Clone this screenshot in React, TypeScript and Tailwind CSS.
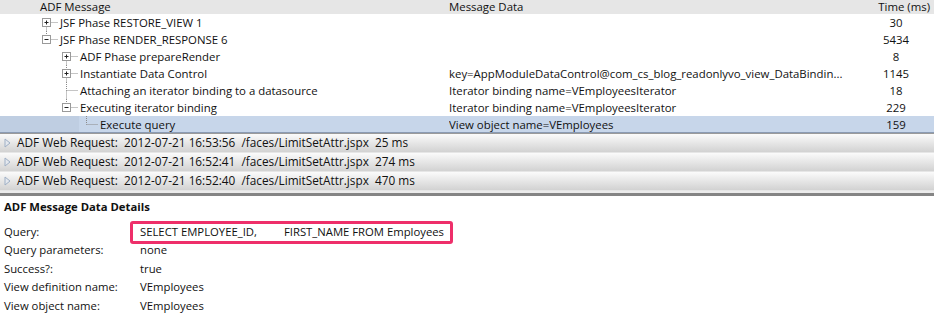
import React from "react";

type TreeRow = {
  level: number;
  label: string;
  data?: string;
  time: string;
  box?: "+" | "-";
  up: boolean;
  down: boolean;
  selected?: boolean;
};

const rows: TreeRow[] = [
  { level: 0, label: "JSF Phase RESTORE_VIEW 1", time: "30", box: "+", up: false, down: true },
  { level: 0, label: "JSF Phase RENDER_RESPONSE 6", time: "5434", box: "-", up: true, down: false },
  { level: 1, label: "ADF Phase prepareRender", time: "8", box: "+", up: false, down: true },
  {
    level: 1,
    label: "Instantiate Data Control",
    data: "key=AppModuleDataControl@com_cs_blog_readonlyvo_view_DataBindin...",
    time: "1145",
    box: "+",
    up: true,
    down: true,
  },
  {
    level: 1,
    label: "Attaching an iterator binding to a datasource",
    data: "Iterator binding name=VEmployeesIterator",
    time: "18",
    up: true,
    down: true,
  },
  {
    level: 1,
    label: "Executing iterator binding",
    data: "Iterator binding name=VEmployeesIterator",
    time: "229",
    box: "-",
    up: true,
    down: false,
  },
  {
    level: 2,
    label: "Execute query",
    data: "View object name=VEmployees",
    time: "159",
    up: true,
    down: false,
    selected: true,
  },
];

const requests = [
  "ADF Web Request:  2012-07-21 16:53:56  /faces/LimitSetAttr.jspx  25 ms",
  "ADF Web Request:  2012-07-21 16:52:41  /faces/LimitSetAttr.jspx  274 ms",
  "ADF Web Request:  2012-07-21 16:52:40  /faces/LimitSetAttr.jspx  470 ms",
];

const details = [
  ["Query parameters:", "none"],
  ["Success?:", "true"],
  ["View definition name:", "VEmployees"],
  ["View object name:", "VEmployees"],
];

// dotted connector + expander box for one row
const TreeGutter = ({ row }: { row: TreeRow }) => {
  const x = 46.5 + row.level * 20;
  const w = 60 + row.level * 20;
  return (
    <svg width={w} height={17} className="shrink-0">
      {row.up && <line x1={x} y1={0} x2={x} y2={8.5} stroke="#8a8a8a" strokeDasharray="1 1" />}
      {row.down && <line x1={x} y1={8.5} x2={x} y2={17} stroke="#8a8a8a" strokeDasharray="1 1" />}
      <line x1={x} y1={8.5} x2={x + 12} y2={8.5} stroke="#8a8a8a" strokeDasharray="1 1" />
      {row.box && (
        <g>
          <rect x={x - 4} y={4.5} width={8} height={8} fill="#fff" stroke="#9a9a9a" />
          <line x1={x - 2} y1={8.5} x2={x + 2} y2={8.5} stroke="#222" />
          {row.box === "+" && <line x1={x} y1={6.5} x2={x} y2={10.5} stroke="#222" />}
        </g>
      )}
    </svg>
  );
};

const App: React.FC = () => {
  return (
    <div
      className="w-[934px] h-[318px] bg-white text-[11.4px] text-[#111] overflow-hidden flex flex-col"
      style={{ fontFamily: '"Open Sans", "Noto Sans", sans-serif' }}
    >
      {/* Column header */}
      <div className="h-[14px] shrink-0 bg-[#e6e6e6] flex items-center leading-[14px]">
        <div className="w-[449px] pl-[40px]">ADF Message</div>
        <div className="flex-1">Message Data</div>
        <div className="pr-[4px]">Time (ms)</div>
      </div>

      {/* Tree rows */}
      {rows.map((row) => (
        <div
          key={row.label}
          className={`h-[17px] shrink-0 flex items-center leading-[17px] ${
            row.selected ? "bg-[#c7d6ea] border-b border-[#8b9bb3]" : ""
          }`}
        >
          <div className="w-[449px] h-full flex items-center relative">
            {row.selected && <div className="absolute left-0 top-0 bottom-0 w-[79px] bg-[#bfcee2]" />}
            <div className="relative flex items-center">
              <TreeGutter row={row} />
              <span className="whitespace-nowrap">{row.label}</span>
            </div>
          </div>
          <div className="w-[411px] whitespace-nowrap overflow-hidden">{row.data ?? ""}</div>
          <div className="w-[72px] text-center">{row.time}</div>
        </div>
      ))}

      <div className="h-px shrink-0 bg-[#9a9a9a]" />

      {/* Web requests */}
      {requests.map((r) => (
        <div
          key={r}
          className="h-[19px] shrink-0 flex items-center gap-[6px] pl-[4px] bg-gradient-to-b from-[#fbfbfb] to-[#d2d2d2] border-b border-[#e6e6e6] text-[11.8px]"
        >
          <svg width="7" height="10" viewBox="0 0 7 10">
            <polygon points="1,1 6,5 1,9" fill="#e4e8ee" stroke="#9fb0c6" />
          </svg>
          <span className="whitespace-pre leading-none">{r}</span>
        </div>
      ))}

      <div className="h-[2px] shrink-0 bg-[#ececec]" />
      <div className="h-[3px] shrink-0 bg-[#858585]" />

      {/* Details */}
      <div className="flex flex-col px-[4px] text-[11.3px]">
        <div className="h-[22px] flex items-center font-bold">ADF Message Data Details</div>
        <div className="h-[23px] flex items-start pt-[3px]">
          <div className="w-[126px] h-[23px] flex items-center">Query:</div>
          <div className="h-[23px] w-[323px] flex items-center border-[3px] border-[#ee2f6a] rounded-[3px] pl-[7px] whitespace-pre">
            <span>SELECT EMPLOYEE_ID,</span>
            <span className="ml-[27px]">FIRST_NAME FROM Employees</span>
          </div>
        </div>
        {details.map(([k, v]) => (
          <div key={k} className="h-[18.75px] flex items-center">
            <div className="w-[136px]">{k}</div>
            <div>{v}</div>
          </div>
        ))}
      </div>
    </div>
  );
};

export default App;
